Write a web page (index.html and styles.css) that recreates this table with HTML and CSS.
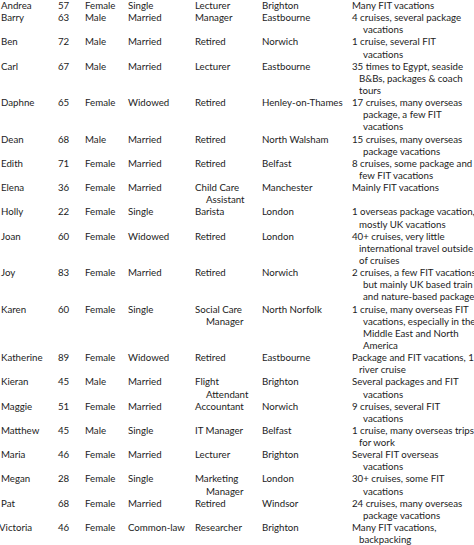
FILE: index.html
```html
<!DOCTYPE html>
<html>
<head>
<meta charset="utf-8">
<link rel="stylesheet" href="styles.css">
</head>
<body>
<table class="tbl">
<colgroup>
<col class="c-name"><col class="c-age"><col class="c-gen"><col class="c-stat"><col class="c-occ"><col class="c-city"><col class="c-exp">
</colgroup>
<tbody>
<tr><td>Andrea</td><td>57</td><td>Female</td><td>Single</td><td>Lecturer</td><td>Brighton</td><td class="exp"><span class="l">Many FIT vacations</span></td></tr>
<tr><td>Barry</td><td>63</td><td>Male</td><td>Married</td><td>Manager</td><td>Eastbourne</td><td class="exp"><span class="l">4 cruises, several package</span><span class="l i2">vacations</span></td></tr>
<tr><td>Ben</td><td>72</td><td>Male</td><td>Married</td><td>Retired</td><td>Norwich</td><td class="exp"><span class="l">1 cruise, several FIT</span><span class="l i2">vacations</span></td></tr>
<tr><td>Carl</td><td>67</td><td>Male</td><td>Married</td><td>Lecturer</td><td>Eastbourne</td><td class="exp"><span class="l">35 times to Egypt, seaside</span><span class="l i1">B&amp;Bs, packages &amp; coach</span><span class="l i1">tours</span></td></tr>
<tr><td>Daphne</td><td>65</td><td>Female</td><td>Widowed</td><td>Retired</td><td>Henley-on-Thames</td><td class="exp"><span class="l">17 cruises, many overseas</span><span class="l i2">package, a few FIT</span><span class="l i2">vacations</span></td></tr>
<tr><td>Dean</td><td>68</td><td>Male</td><td>Married</td><td>Retired</td><td>North Walsham</td><td class="exp"><span class="l">15 cruises, many overseas</span><span class="l i2">package vacations</span></td></tr>
<tr><td>Edith</td><td>71</td><td>Female</td><td>Married</td><td>Retired</td><td>Belfast</td><td class="exp"><span class="l">8 cruises, some package and a</span><span class="l i1">few FIT vacations</span></td></tr>
<tr><td>Elena</td><td>36</td><td>Female</td><td>Married</td><td><span class="l">Child Care</span><span class="l io">Assistant</span></td><td>Manchester</td><td class="exp"><span class="l">Mainly FIT vacations</span></td></tr>
<tr><td>Holly</td><td>22</td><td>Female</td><td>Single</td><td>Barista</td><td>London</td><td class="exp"><span class="l">1 overseas package vacation,</span><span class="l i1">mostly UK vacations</span></td></tr>
<tr><td>Joan</td><td>60</td><td>Female</td><td>Widowed</td><td>Retired</td><td>London</td><td class="exp"><span class="l">40+ cruises, very little</span><span class="l i1">international travel outside</span><span class="l i1">of cruises</span></td></tr>
<tr><td>Joy</td><td>83</td><td>Female</td><td>Married</td><td>Retired</td><td>Norwich</td><td class="exp"><span class="l">2 cruises, a few FIT vacations</span><span class="l i2">but mainly UK based train</span><span class="l i2">and nature-based packages</span></td></tr>
<tr><td>Karen</td><td>60</td><td>Female</td><td>Single</td><td><span class="l">Social Care</span><span class="l io">Manager</span></td><td>North Norfolk</td><td class="exp"><span class="l">1 cruise, many overseas FIT</span><span class="l i2">vacations, especially in the</span><span class="l i2">Middle East and North</span><span class="l i2">America</span></td></tr>
<tr><td>Katherine</td><td>89</td><td>Female</td><td>Widowed</td><td>Retired</td><td>Eastbourne</td><td class="exp"><span class="l">Package and FIT vacations, 1</span><span class="l i1">river cruise</span></td></tr>
<tr><td>Kieran</td><td>45</td><td>Male</td><td>Married</td><td><span class="l">Flight</span><span class="l io">Attendant</span></td><td>Brighton</td><td class="exp"><span class="l">Several packages and FIT</span><span class="l i2">vacations</span></td></tr>
<tr><td>Maggie</td><td>51</td><td>Female</td><td>Married</td><td>Accountant</td><td>Norwich</td><td class="exp"><span class="l">9 cruises, several FIT</span><span class="l i2">vacations</span></td></tr>
<tr><td>Matthew</td><td>45</td><td>Male</td><td>Single</td><td>IT Manager</td><td>Belfast</td><td class="exp"><span class="l">1 cruise, many overseas trips</span><span class="l i1">for work</span></td></tr>
<tr><td>Maria</td><td>46</td><td>Female</td><td>Married</td><td>Lecturer</td><td>Brighton</td><td class="exp"><span class="l">Several FIT overseas</span><span class="l i2">vacations</span></td></tr>
<tr><td>Megan</td><td>28</td><td>Female</td><td>Single</td><td><span class="l">Marketing</span><span class="l io">Manager</span></td><td>London</td><td class="exp"><span class="l">30+ cruises, some FIT</span><span class="l i2">vacations</span></td></tr>
<tr><td>Pat</td><td>68</td><td>Female</td><td>Married</td><td>Retired</td><td>Windsor</td><td class="exp"><span class="l">24 cruises, many overseas</span><span class="l i2">package vacations</span></td></tr>
<tr><td class="vic">Victoria</td><td>46</td><td>Female</td><td>Common-law</td><td>Researcher</td><td>Brighton</td><td class="exp"><span class="l">Many FIT vacations,</span><span class="l i1">backpacking</span></td></tr>
</tbody>
</table>
</body>
</html>
```
FILE: styles.css
```css
html, body {
  margin: 0;
  padding: 0;
  background: #ffffff;
  overflow: hidden;
}
body {
  width: 474px;
  height: 545px;
  font-family: "Lato", "Open Sans", sans-serif;
  font-size: 9.7px;
  line-height: 12.14px;
  color: #1c1c1c;
}
.tbl {
  table-layout: fixed;
  border-collapse: collapse;
  border-spacing: 0;
  width: 520px;
  margin-top: -1px;
  margin-left: 1px;
}
.tbl td {
  padding: 0;
  vertical-align: top;
  white-space: nowrap;
  overflow: visible;
}
.c-name { width: 57px; }
.c-age { width: 27px; }
.c-gen { width: 43px; }
.c-stat { width: 67px; }
.c-occ { width: 67px; }
.c-city { width: 90px; }
.c-exp { width: 169px; }
.l { display: block; }
.i1 { padding-left: 7px; }
.i2 { padding-left: 11px; }
.io { padding-left: 11px; }
.vic { text-indent: -2px; }
```
